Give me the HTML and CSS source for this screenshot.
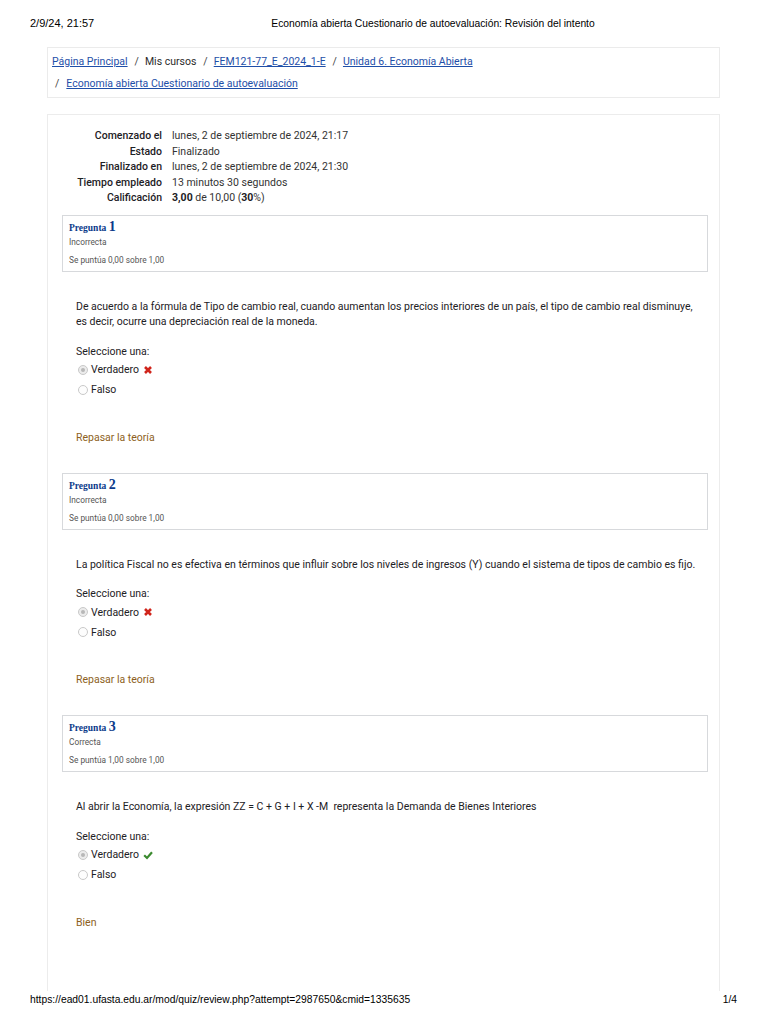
FILE: index.html
```html
<!DOCTYPE html>
<html lang="es">
<head>
<meta charset="utf-8">
<title>Economía abierta Cuestionario de autoevaluación: Revisión del intento</title>
<link rel="stylesheet" href="styles.css">
</head>
<body>
<header class="print-head">
  <span class="ph-date">2/9/24, 21:57</span>
  <span class="ph-title">Economía abierta Cuestionario de autoevaluación: Revisión del intento</span>
</header>

<nav class="crumbs">
  <div class="crumb-line"><a href="#">Página Principal</a><span class="sep">/</span><span>Mis cursos</span><span class="sep">/</span><a href="#">FEM121-77_E_2024_1-E</a><span class="sep">/</span><a href="#">Unidad 6. Economía Abierta</a></div>
  <div class="crumb-line second"><span class="sep first">/</span><a href="#">Economía abierta Cuestionario de autoevaluación</a></div>
</nav>

<main class="page">
  <table class="summary">
    <tr><th>Comenzado el</th><td>lunes, 2 de septiembre de 2024, 21:17</td></tr>
    <tr><th>Estado</th><td>Finalizado</td></tr>
    <tr><th>Finalizado en</th><td>lunes, 2 de septiembre de 2024, 21:30</td></tr>
    <tr><th>Tiempo empleado</th><td>13 minutos 30 segundos</td></tr>
    <tr><th>Calificación</th><td><b>3,00</b> de 10,00 (<b>30</b>%)</td></tr>
  </table>

  <section class="que">
    <div class="info">
      <div class="qno">Pregunta <span class="num">1</span></div>
      <div class="state">Incorrecta</div>
      <div class="grade">Se puntúa 0,00 sobre 1,00</div>
    </div>
    <div class="content">
      <p class="qtext">De acuerdo a la fórmula de Tipo de cambio real, cuando aumentan los precios interiores de un país, el tipo de cambio real disminuye, es decir, ocurre una depreciación real de la moneda.</p>
      <p class="prompt">Seleccione una:</p>
      <div class="opt"><span class="radio checked"></span>Verdadero <svg class="mark" viewBox="0 0 10 10"><path d="M2 2 L8 8 M8 2 L2 8" stroke="#d0241b" stroke-width="2.6" stroke-linecap="butt"/></svg></div>
      <div class="opt"><span class="radio"></span>Falso</div>
      <p class="feedback">Repasar la teoría</p>
    </div>
  </section>

  <section class="que">
    <div class="info">
      <div class="qno">Pregunta <span class="num">2</span></div>
      <div class="state">Incorrecta</div>
      <div class="grade">Se puntúa 0,00 sobre 1,00</div>
    </div>
    <div class="content">
      <p class="qtext">La política Fiscal no es efectiva en términos que influir sobre los niveles de ingresos (Y) cuando el sistema de tipos de cambio es fijo.</p>
      <p class="prompt">Seleccione una:</p>
      <div class="opt"><span class="radio checked"></span>Verdadero <svg class="mark" viewBox="0 0 10 10"><path d="M2 2 L8 8 M8 2 L2 8" stroke="#d0241b" stroke-width="2.6" stroke-linecap="butt"/></svg></div>
      <div class="opt"><span class="radio"></span>Falso</div>
      <p class="feedback">Repasar la teoría</p>
    </div>
  </section>

  <section class="que">
    <div class="info">
      <div class="qno">Pregunta <span class="num">3</span></div>
      <div class="state">Correcta</div>
      <div class="grade">Se puntúa 1,00 sobre 1,00</div>
    </div>
    <div class="content">
      <p class="qtext">Al abrir la Economía, la expresión ZZ = C + G + I + X -M&nbsp; representa la Demanda de Bienes Interiores</p>
      <p class="prompt">Seleccione una:</p>
      <div class="opt"><span class="radio checked"></span>Verdadero <svg class="mark" viewBox="0 0 10 10"><path d="M1.2 5.2 L4 8 L9 2.2" fill="none" stroke="#3b8a2f" stroke-width="2.2"/></svg></div>
      <div class="opt"><span class="radio"></span>Falso</div>
      <p class="feedback">Bien</p>
    </div>
  </section>
</main>

<footer class="print-foot">
  <span>https://ead01.ufasta.edu.ar/mod/quiz/review.php?attempt=2987650&amp;cmid=1335635</span>
  <span>1/4</span>
</footer>
</body>
</html>
```

FILE: styles.css
```css
* { box-sizing: border-box; }
html, body { margin: 0; padding: 0; background: #fff; }
body {
  width: 768px;
  height: 1024px;
  overflow: hidden;
  font-family: Roboto, "Liberation Sans", sans-serif;
  color: #1d2125;
}

.print-head {
  display: flex;
  align-items: center;
  height: 16px;
  margin-top: 15px;
  padding-left: 30px;
  font-family: "Liberation Sans", Arial, sans-serif;
  font-size: 10.5px;
  color: #000;
}
.ph-date { width: 68px; font-size: 11px; }
.ph-title { flex: 1; text-align: center; font-size: 10.3px; }

.crumbs {
  margin: 16px 0 0 47px;
  width: 673px;
  height: 51px;
  border: 1px solid #ebebeb;
  padding: 3px 0 0 4px;
  font-size: 10.5px;
  color: #2b2b2b;
}
.crumb-line { height: 22px; line-height: 22px; white-space: nowrap; }
.crumbs a { color: #1e4ea8; text-decoration: underline; }
.sep { margin: 0 6px 0 7px; color: #444; }
.sep.first { margin-left: 3px; margin-right: 7px; }

.page {
  margin: 16px 0 0 47px;
  width: 673px;
  height: 877px;
  border: 1px solid #ececec;
  border-bottom: none;
  padding: 13px 13px 0 14px;
  overflow: hidden;
}

.summary {
  border-collapse: collapse;
  font-size: 10.5px;
  margin-bottom: 9px;
}
.summary th {
  width: 110px;
  text-align: right;
  font-weight: 500;
  padding: 0 10px 0 0;
  height: 15.5px;
  line-height: 15.5px;
  white-space: nowrap;
}
.summary td { padding: 0; line-height: 15.5px; color: #333; }
.summary td b { font-weight: 700; color: #1d2125; }

.info {
  width: 646px;
  height: 57px;
  border: 1px solid #d7d9dc;
  padding: 2px 6px 0;
}
.qno {
  font-family: "Liberation Serif", "DejaVu Serif", serif;
  font-weight: 700;
  font-size: 9.5px;
  color: #0b3a8a;
  height: 17px;
  line-height: 17px;
}
.qno .num { font-size: 14px; font-weight: 700; }
.state, .grade {
  font-size: 8.3px;
  color: #555;
  line-height: 10px;
}
.state { margin-top: 2px; }
.grade { margin-top: 8px; }

.content {
  padding: 27px 0 0 14px;
  font-size: 10.5px;
}
.qtext {
  margin: 0;
  line-height: 15.5px;
  width: 625px;
  color: #1d2125;
}
.prompt {
  margin: 14px 0 0;
  line-height: 16px;
}
.opt {
  display: flex;
  align-items: center;
  height: 20px;
  padding-left: 2px;
}
.radio {
  width: 10px;
  height: 10px;
  border-radius: 50%;
  border: 1px solid #c9c9c9;
  background: #fdfdfd;
  margin-right: 3px;
  position: relative;
}
.radio.checked::after {
  content: "";
  position: absolute;
  left: 2px; top: 2px;
  width: 4px; height: 4px;
  border-radius: 50%;
  background: #b8b8b8;
}
.radio.checked { background: #ececec; }
.mark { width: 10px; height: 10px; margin-left: 4px; }
.feedback {
  margin: 30px 0 0;
  line-height: 16px;
  color: #8d5f22;
  height: 43px;
}

.print-foot {
  display: flex;
  justify-content: space-between;
  padding: 0 31px 0 30px;
  margin-top: 3px;
  font-family: "Liberation Sans", Arial, sans-serif;
  font-size: 10.3px;
  color: #000;
}
```
